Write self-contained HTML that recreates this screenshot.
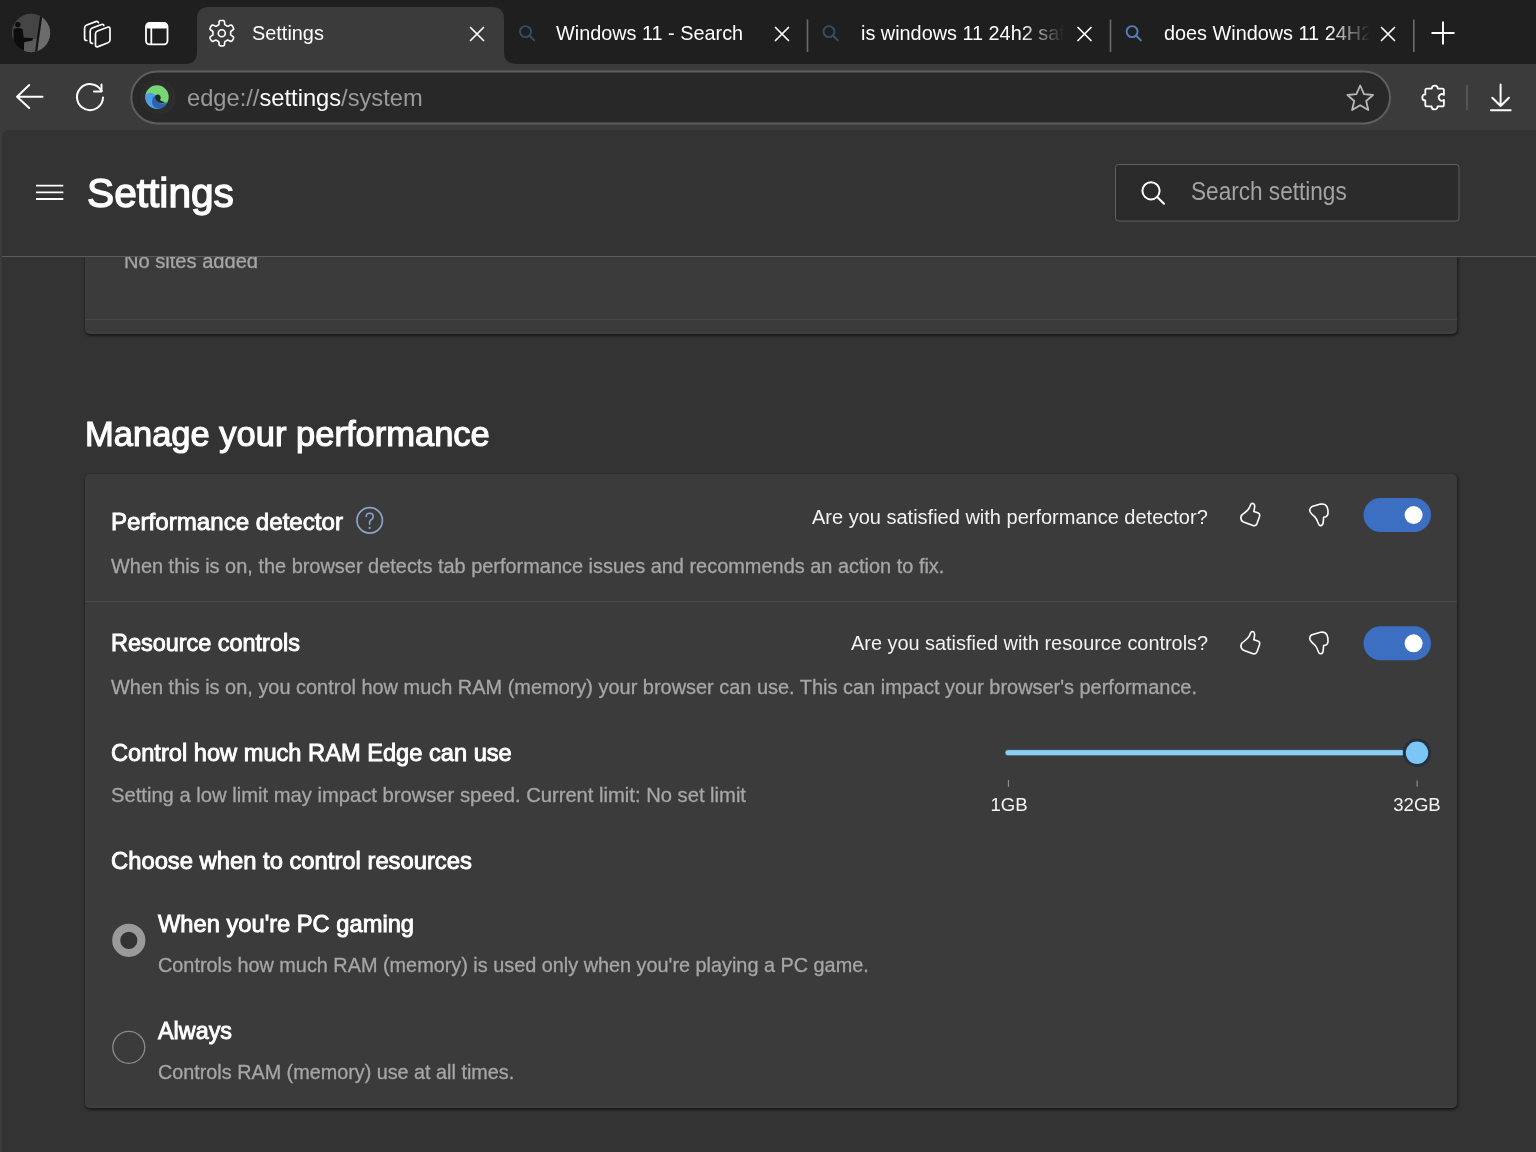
<!DOCTYPE html>
<html><head><meta charset="utf-8">
<style>
*{box-sizing:border-box;margin:0;padding:0}
html,body{width:1536px;height:1152px;overflow:hidden;background:#303030;font-family:"Liberation Sans",sans-serif}
.a{position:absolute}
.t{position:absolute;white-space:nowrap;line-height:1;will-change:transform}
svg{position:absolute;overflow:visible}
#strip{left:0;top:0;width:1536px;height:64px;background:#1f1f1f}
#toolbar{left:0;top:64px;width:1536px;height:1088px;background:#3b3b3b}
#content{left:2px;top:130px;width:1534px;height:1022px;background:#333333;border-top-left-radius:7px}
#hdr{left:2px;top:130px;width:1534px;height:127px;background:#333333;border-top-left-radius:7px;border-bottom:1px solid #5c5c5c}
.card{position:absolute;background:#3b3b3b;border-radius:5px;box-shadow:inset 0 -1.5px 0 rgba(255,255,255,.035),1px 1px 3px rgba(0,0,0,.4),0 2px 3px rgba(0,0,0,.35)}
.ttl{color:#ffffff;font-weight:700}
.dsc{color:#a6a6a6;-webkit-text-stroke:0.3px #a6a6a6}
.sb{color:#ffffff;font-weight:400;-webkit-text-stroke:0.9px #ffffff}
</style></head><body>
<div id="strip" class="a"></div>
<div id="toolbar" class="a"></div>
<div id="content" class="a"></div>

<!-- tab strip -->
<svg width="1536" height="132" style="left:0;top:0">
  <path d="M185 64 Q197 64 197 52 L197 19 Q197 7 209 7 L492 7 Q504 7 504 19 L504 52 Q504 64 516 64 Z" fill="#3b3b3b"/>
  <!-- avatar -->
  <defs><clipPath id="av"><circle cx="31" cy="33" r="19.2"/></clipPath></defs>
  <g clip-path="url(#av)">
    <rect x="10" y="13" width="42" height="41" fill="#454545"/>
    <rect x="23" y="39" width="14" height="15" fill="#5a5a5a"/>
    <path d="M41.5 13 L52 13 L52 54 L35.8 54 Z" fill="#6c6c6c"/>
    <path d="M41.6 13 L35.8 54" stroke="#141414" stroke-width="2.2"/>
    <circle cx="17.8" cy="24.6" r="2.7" fill="#0d0d0d"/>
    <path d="M13.5 29 Q18 26.8 22.5 29 L23.8 37.8 L33 38 L32.5 40.5 L24.2 42.3 L23.8 54 L13.5 54 Z" fill="#0d0d0d"/>
  </g>
  <!-- workspaces -->
  <g fill="none" stroke="#ffffff" stroke-width="1.7" stroke-linejoin="round" stroke-linecap="round">
    <path d="M86.8 40.5 Q84.6 40.5 84.6 38.4 L84.6 28 Q84.6 25.8 86.7 25 L95.8 21.6 Q97.8 21.1 98.5 22.6"/>
    <path d="M92.5 43.4 Q90.2 43.4 90.2 41.3 L90.2 31 Q90.2 28.8 92.3 28 L101.5 24.5 Q103.5 24 103.8 25.5"/>
    <path d="M97.5 31 L107.5 27.3 Q110 26.5 110 29 L110 40 Q110 42 108 42.7 L98 46.6 Q95.5 47.5 95.5 45 L95.5 33.8 Q95.5 31.8 97.5 31 Z"/>
  </g>
  <!-- vertical tabs icon -->
  <rect x="146" y="23" width="21.5" height="21.3" rx="3.5" fill="none" stroke="#ffffff" stroke-width="1.8"/>
  <rect x="146" y="23" width="21.5" height="5.5" rx="2" fill="#ffffff"/>
  <path d="M151.3 28 L151.3 44" stroke="#ffffff" stroke-width="1.8"/>
  <!-- gear -->
  <g transform="translate(221.8,33.2)" fill="none" stroke="#ffffff" stroke-width="1.65" stroke-linejoin="round">
    <path d="M8.85 0.00 L8.85 0.31 L8.83 0.62 L8.82 0.93 L8.82 1.24 L8.89 1.57 L9.17 1.95 L9.90 2.47 L10.95 3.14 L11.63 3.78 L11.82 4.30 L11.77 4.75 L11.63 5.18 L11.45 5.59 L11.26 5.99 L11.04 6.37 L10.81 6.76 L10.56 7.13 L10.30 7.48 L10.00 7.81 L9.63 8.08 L9.09 8.18 L8.20 7.92 L7.09 7.34 L6.27 6.96 L5.80 6.91 L5.49 7.02 L5.21 7.18 L4.95 7.34 L4.69 7.51 L4.43 7.66 L4.16 7.82 L3.88 7.96 L3.61 8.10 L3.34 8.26 L3.09 8.48 L2.90 8.91 L2.81 9.81 L2.76 11.06 L2.54 11.96 L2.18 12.38 L1.77 12.57 L1.33 12.66 L0.89 12.71 L0.44 12.74 L0.00 12.75 L-0.44 12.74 L-0.89 12.71 L-1.33 12.66 L-1.77 12.57 L-2.18 12.38 L-2.54 11.96 L-2.76 11.06 L-2.81 9.81 L-2.90 8.91 L-3.09 8.48 L-3.34 8.26 L-3.61 8.10 L-3.88 7.96 L-4.16 7.82 L-4.42 7.66 L-4.69 7.51 L-4.95 7.34 L-5.21 7.18 L-5.49 7.02 L-5.80 6.91 L-6.27 6.96 L-7.09 7.34 L-8.20 7.92 L-9.09 8.18 L-9.63 8.08 L-10.00 7.81 L-10.30 7.48 L-10.56 7.13 L-10.81 6.76 L-11.04 6.37 L-11.26 5.99 L-11.45 5.59 L-11.63 5.18 L-11.77 4.75 L-11.82 4.30 L-11.63 3.78 L-10.95 3.14 L-9.90 2.47 L-9.17 1.95 L-8.89 1.57 L-8.82 1.24 L-8.82 0.93 L-8.83 0.62 L-8.85 0.31 L-8.85 0.00 L-8.85 -0.31 L-8.83 -0.62 L-8.82 -0.93 L-8.82 -1.24 L-8.89 -1.57 L-9.17 -1.95 L-9.90 -2.47 L-10.95 -3.14 L-11.63 -3.78 L-11.82 -4.30 L-11.77 -4.75 L-11.63 -5.18 L-11.45 -5.59 L-11.26 -5.99 L-11.04 -6.38 L-10.81 -6.76 L-10.56 -7.13 L-10.30 -7.48 L-10.00 -7.81 L-9.63 -8.08 L-9.09 -8.18 L-8.20 -7.92 L-7.09 -7.34 L-6.27 -6.96 L-5.80 -6.91 L-5.49 -7.02 L-5.21 -7.18 L-4.95 -7.34 L-4.69 -7.51 L-4.43 -7.66 L-4.16 -7.82 L-3.88 -7.96 L-3.61 -8.10 L-3.34 -8.26 L-3.09 -8.48 L-2.90 -8.91 L-2.81 -9.81 L-2.76 -11.06 L-2.54 -11.96 L-2.18 -12.38 L-1.77 -12.57 L-1.33 -12.66 L-0.89 -12.71 L-0.44 -12.74 L-0.00 -12.75 L0.44 -12.74 L0.89 -12.71 L1.33 -12.66 L1.77 -12.57 L2.18 -12.38 L2.54 -11.96 L2.76 -11.06 L2.81 -9.81 L2.90 -8.91 L3.09 -8.48 L3.34 -8.26 L3.61 -8.10 L3.88 -7.96 L4.16 -7.82 L4.43 -7.66 L4.69 -7.51 L4.95 -7.34 L5.21 -7.18 L5.49 -7.02 L5.80 -6.91 L6.27 -6.96 L7.09 -7.34 L8.20 -7.92 L9.09 -8.18 L9.63 -8.08 L10.00 -7.81 L10.30 -7.48 L10.56 -7.13 L10.81 -6.76 L11.04 -6.38 L11.26 -5.99 L11.45 -5.59 L11.63 -5.18 L11.77 -4.75 L11.82 -4.30 L11.63 -3.78 L10.95 -3.14 L9.90 -2.47 L9.17 -1.95 L8.89 -1.57 L8.82 -1.24 L8.82 -0.93 L8.83 -0.62 L8.85 -0.31 Z"/>
    <circle r="3.5"/>
  </g>
  <!-- close X tabs -->
  <g stroke="#ffffff" stroke-width="1.7" stroke-linecap="round">
    <path d="M470.5 27.5 L483.5 40.5 M483.5 27.5 L470.5 40.5"/>
    <path d="M775.5 27.5 L788.5 40.5 M788.5 27.5 L775.5 40.5"/>
    <path d="M1078 27.5 L1091 40.5 M1091 27.5 L1078 40.5"/>
    <path d="M1381.5 27.5 L1394.5 40.5 M1394.5 27.5 L1381.5 40.5"/>
  </g>
  <!-- separators -->
  <g stroke="#6b6b6b" stroke-width="1.6">
    <path d="M807.5 19.5 L807.5 52"/>
    <path d="M1110.5 19.5 L1110.5 52"/>
    <path d="M1413.8 19.5 L1413.8 52"/>
  </g>
  <!-- plus -->
  <path d="M1443 21.5 L1443 44.5 M1431.5 33 L1454.5 33" stroke="#ffffff" stroke-width="1.9"/>
  <!-- search icons in tabs -->
  <g fill="none" stroke-width="1.9" stroke-linecap="round">
    <g stroke="#394d66"><circle cx="525.5" cy="31.6" r="5.5"/><path d="M529.4 35.5 L534.3 40.4"/></g>
    <g stroke="#394d66"><circle cx="829" cy="31.6" r="5.5"/><path d="M832.9 35.5 L837.8 40.4"/></g>
    <g stroke="#5a7fbb"><circle cx="1132.1" cy="31.6" r="5.5"/><path d="M1136 35.5 L1140.9 40.4"/></g>
  </g>
  <!-- back arrow -->
  <g fill="none" stroke="#ffffff" stroke-width="2" stroke-linecap="round" stroke-linejoin="round">
    <path d="M17 96.7 L42.5 96.7 M29.2 85 L17 96.7 L29.2 108"/>
    <path d="M101.5 91 A13 13 0 1 0 103 97.5"/>
    <path d="M101.5 84.5 L101.5 91.6 L94 91.6"/>
  </g>
  <!-- address bar -->
  <rect x="131.3" y="71.6" width="1258.7" height="51.8" rx="25.9" fill="#282828" stroke="#5e5e5e" stroke-width="2"/>
  <circle cx="159" cy="97.5" r="17" fill="#2e2e2e"/>
  <!-- star -->
  <path d="M1360.2 85.5 L1364 94.2 L1373 95 L1366.2 101 L1368.3 110 L1360.2 105.2 L1352.1 110 L1354.2 101 L1347.4 95 L1356.4 94.2 Z" fill="none" stroke="#b8b8b8" stroke-width="1.8" stroke-linejoin="round"/>
  <!-- puzzle -->
  <path d="M1427 88.6 L1431.8 88.6 A3 3 0 0 1 1437.8 88.6 L1442.2 88.6 Q1443.9 88.6 1443.9 90.3 L1443.9 94.9 A3.2 3.2 0 1 0 1443.9 99.9 L1443.9 104.7 Q1443.9 106.4 1442.2 106.4 L1437.6 106.4 A3 3 0 0 1 1431.6 106.4 L1427 106.4 Q1425.3 106.4 1425.3 104.7 L1425.3 100.4 A3 3 0 0 1 1425.3 94.4 L1425.3 90.3 Q1425.3 88.6 1427 88.6 Z" fill="none" stroke="#ffffff" stroke-width="1.8" stroke-linejoin="round"/>
  <path d="M1467 85 L1467 110" stroke="#5c5c5c" stroke-width="1.6"/>
  <!-- download -->
  <g fill="none" stroke="#ffffff" stroke-width="2" stroke-linecap="round" stroke-linejoin="round">
    <path d="M1500.6 84.5 L1500.6 106 M1492.3 97.7 L1500.6 106 L1508.9 97.7"/>
    <path d="M1491 110.2 L1510.6 110.2"/>
  </g>
</svg>

<div class="t" style="left:252px;top:24.3px;font-size:19.9px;color:#ffffff">Settings</div>
<div class="t" style="left:556px;top:24.3px;font-size:19.85px;color:#ffffff">Windows 11 - Search</div>
<div class="t" style="left:861px;top:24.3px;font-size:19.85px;color:#ffffff;width:203px;overflow:hidden;-webkit-mask-image:linear-gradient(to right,#000 160px,transparent 203px)">is windows 11 24h2 safe to install</div>
<div class="t" style="left:1163.5px;top:24.3px;font-size:19.85px;color:#ffffff;width:206px;overflow:hidden;-webkit-mask-image:linear-gradient(to right,#000 165px,transparent 206px)">does Windows 11 24H2 help</div>

<!-- edge logo -->
<svg width="40" height="40" style="left:137px;top:77px" viewBox="-20 -20 40 40">
  <circle cx="0" cy="0" r="17" fill="#2c2c2c"/>
  <circle cx="0" cy="0" r="11.7" fill="#79d675"/>
  <path d="M-11.4 -2.6 A11.7 11.7 0 0 0 10.6 5 Q6 7.5 2 5.5 Q-2.5 3 -1.5 -1.5 Q-5.5 -6.5 -11.4 -2.6 Z" fill="#4f9ce6"/>
  <path d="M-5 5 A7 7 0 0 0 6 10.5 A11.7 11.7 0 0 0 10.6 5 Q6 7.5 2 5.5 Q-2.5 3 -1.5 -1.5 Q-5 0 -5 5Z" fill="#2d63ac"/>
  <path d="M-1.6 -1.4 Q0.5 -3.5 3 -1.5 Q4.5 0.5 3 3 Q4.5 4.5 8 5.2 Q4 7 1 5 Q-3 2 -1.6 -1.4Z" fill="#1c2a2a"/>
</svg>
<div class="t" style="left:186.5px;top:86.9px;font-size:23.7px;color:#9a9a9a">edge://<span style="color:#ffffff">settings</span>/system</div>

<!-- page cards -->
<div class="card" style="left:85px;top:150px;width:1372px;height:184px"></div>
<div class="a" style="left:85px;top:319px;width:1372px;height:1px;background:#474747"></div>
<div class="t dsc" style="left:124px;top:250.8px;font-size:20.1px">No sites added</div>

<div id="hdr" class="a"></div>
<svg width="1536" height="260" style="left:0;top:0">
  <g stroke="#ffffff" stroke-width="1.8">
    <path d="M36 185.6 L63.3 185.6 M36 192.3 L63.3 192.3 M36 199 L63.3 199"/>
  </g>
  <rect x="1115.5" y="164.5" width="343.5" height="56.5" rx="3" fill="#2b2b2b" stroke="#5f5f5f" stroke-width="1"/>
  <g fill="none" stroke="#ffffff" stroke-width="2" stroke-linecap="round">
    <circle cx="1151" cy="190.8" r="8.6"/>
    <path d="M1157.2 197 L1164 203.8"/>
  </g>
</svg>
<div class="t sb" style="left:86.5px;top:173.4px;font-size:40.68px;-webkit-text-stroke:1.3px #fff">Settings</div>
<div class="t" style="left:1191px;top:181.9px;font-size:22.6px;transform:scaleY(1.13);transform-origin:0 84.65%;color:#a3a3a3">Search settings</div>

<div class="t sb" style="left:84.5px;top:416.8px;font-size:34.53px;-webkit-text-stroke:1.15px #fff">Manage your performance</div>
<div class="card" style="left:85px;top:474px;width:1372px;height:634px"></div>
<div class="a" style="left:85px;top:601px;width:1372px;height:1px;background:#4a4a4a"></div>

<div class="t sb" style="left:111.0px;top:509.6px;font-size:24.13px">Performance detector</div>
<div class="t" style="right:328px;top:506.5px;font-size:20px;color:#f2f2f2">Are you satisfied with performance detector?</div>
<div class="t dsc" style="left:111px;top:556.9px;font-size:19.95px">When this is on, the browser detects tab performance issues and recommends an action to fix.</div>

<div class="t sb" style="left:111.0px;top:631.8px;font-size:23.45px">Resource controls</div>
<div class="t" style="right:328px;top:634px;font-size:19.9px;color:#f2f2f2">Are you satisfied with resource controls?</div>
<div class="t dsc" style="left:111px;top:678px;font-size:19.95px">When this is on, you control how much RAM (memory) your browser can use. This can impact your browser's performance.</div>

<div class="t sb" style="left:111.0px;top:742.0px;font-size:23.65px">Control how much RAM Edge can use</div>
<div class="t dsc" style="left:111px;top:785.2px;font-size:20.2px">Setting a low limit may impact browser speed. Current limit: No set limit</div>

<div class="t sb" style="left:111.0px;top:848.9px;font-size:23.79px">Choose when to control resources</div>
<div class="t sb" style="left:157.5px;top:912.6px;font-size:23.69px">When you're PC gaming</div>
<div class="t dsc" style="left:158px;top:956.4px;font-size:19.85px">Controls how much RAM (memory) is used only when you're playing a PC game.</div>
<div class="t sb" style="left:157.5px;top:1019.9px;font-size:23.36px">Always</div>
<div class="t dsc" style="left:158px;top:1063.4px;font-size:19.8px">Controls RAM (memory) use at all times.</div>

<svg width="1536" height="1152" style="left:0;top:0">
  <!-- help icon -->
  <circle cx="369.7" cy="520.4" r="12.7" fill="none" stroke="#8ca4c8" stroke-width="1.7"/>
  <path d="M366.2 516.4 Q366.2 513.2 369.7 513.2 Q373.2 513.2 373.2 516.4 Q373.2 518.6 371.2 519.8 Q369.6 520.8 369.6 522.6 L369.6 524.2" fill="none" stroke="#8ca4c8" stroke-width="1.6" stroke-linecap="round"/>
  <circle cx="369.6" cy="527.9" r="1.1" fill="#8ca4c8"/>
  <!-- thumbs -->
  <g fill="none" stroke="#ffffff" stroke-width="1.6" stroke-linejoin="round" stroke-linecap="round">
    <path d="M1251 504 Q1252.4 502.6 1253.9 504 Q1255.2 505.6 1254.4 508.5 L1253.8 511.6 L1257.8 512.8 Q1260.2 513.6 1259.6 516.2 L1257 523.6 Q1256 526.2 1253 525.6 L1243.5 522 Q1240.8 520.8 1240.9 517.4 Q1241.1 514.8 1244 513.2 Q1247.5 511 1249.2 508 Z"/>
    <path d="M1321 525.6 Q1319 525.8 1318.3 523.4 Q1317 519 1314.6 516.6 Q1311.6 514.2 1310.1 511.8 Q1309 508.2 1312 506.6 L1320.5 504.1 Q1325 503.3 1326.9 506.6 Q1328.3 510 1328 513 Q1327.8 516.6 1325.2 517 L1323.6 517.3 L1323.3 521.5 Q1323 525.4 1321 525.6 Z"/>
    <path d="M 1251.0 632.2 Q 1252.4 630.8 1253.9 632.2 Q 1255.2 633.8 1254.4 636.7 L 1253.8 639.8 L 1257.8 641.0 Q 1260.2 641.8 1259.6 644.4 L 1257.0 651.8 Q 1256.0 654.4 1253.0 653.8 L 1243.5 650.2 Q 1240.8 649.0 1240.9 645.6 Q 1241.1 643.0 1244.0 641.4 Q 1247.5 639.2 1249.2 636.2 Z"/>
    <path d="M 1321.0 653.8 Q 1319.0 654.0 1318.3 651.6 Q 1317.0 647.2 1314.6 644.8 Q 1311.6 642.4 1310.1 640.0 Q 1309.0 636.4 1312.0 634.8 L 1320.5 632.3 Q 1325.0 631.5 1326.9 634.8 Q 1328.3 638.2 1328.0 641.2 Q 1327.8 644.8 1325.2 645.2 L 1323.6 645.5 L 1323.3 649.7 Q 1323.0 653.6 1321.0 653.8 Z"/>
  </g>
  <!-- toggles -->
  <rect x="1363.5" y="498" width="67.5" height="34" rx="17" fill="#3c6fc2"/>
  <circle cx="1413.6" cy="515" r="9" fill="#ffffff"/>
  <rect x="1363.5" y="626.3" width="67.5" height="34" rx="17" fill="#3c6fc2"/>
  <circle cx="1413.6" cy="643.3" r="9" fill="#ffffff"/>
  <!-- slider -->
  <rect x="1005" y="749.7" width="400" height="6" rx="3" fill="#8ccdf5" stroke="#2a3540" stroke-width="0.6"/>
  <circle cx="1417" cy="752.8" r="14.2" fill="#26313b"/>
  <circle cx="1417" cy="752.8" r="11.2" fill="#7cc5f7"/>
  <path d="M1008.4 780 L1008.4 786.8 M1417.1 780.5 L1417.1 786.6" stroke="#9a9a9a" stroke-width="1"/>
  <!-- radios -->
  <circle cx="128.8" cy="940.3" r="12.6" fill="#333333" stroke="#9a9a9a" stroke-width="8"/>
  <circle cx="128.8" cy="1047.3" r="16" fill="none" stroke="#8a8a8a" stroke-width="1.3"/>
</svg>
<div class="t" style="left:959px;width:100px;text-align:center;top:795.5px;font-size:18.6px;color:#f4f4f4">1GB</div>
<div class="t" style="left:1367px;width:100px;text-align:center;top:795.5px;font-size:18.6px;color:#f4f4f4">32GB</div>

</body></html>
